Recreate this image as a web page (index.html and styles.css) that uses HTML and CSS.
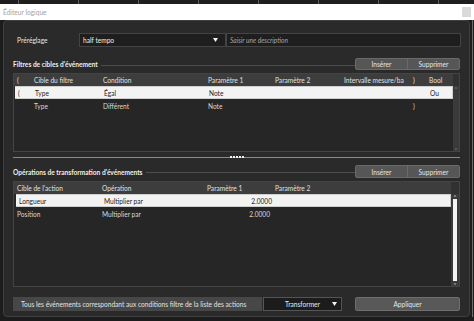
FILE: index.html
```html
<!DOCTYPE html>
<html lang="fr">
<head>
  <meta charset="UTF-8" />
  <title>Éditeur logique</title>
  <link rel="stylesheet" href="styles.css">
</head>
<body>

<div class="desk"></div>

<div class="titlebar">
  <span class="title">Éditeur logique</span>
  <span class="close"></span>
</div>

<div class="frame">
  <div class="panel">

    <div class="preset">
      <span class="preset-label">Préréglage</span>
      <div class="combo">
        <span>half tempo</span>
        <svg class="arrow" width="5" height="4" viewBox="0 0 5 4"><path d="M0 0H5L2.5 4Z" fill="#f2f2f2"/></svg>
      </div>
      <div class="desc">Saisir une description</div>
    </div>

    <div class="group-head">
      <span class="group-title">Filtres de cibles d'événement</span>
      <span class="rule"></span>
      <div class="btns">
        <button>Insérer</button>
        <button>Supprimer</button>
      </div>
    </div>

    <div class="table table-filters">
      <div class="grid">
        <div class="row head">
          <span>(</span><span>Cible du filtre</span><span>Condition</span><span>Paramètre 1</span><span>Paramètre 2</span><span>Intervalle mesure/ba</span><span>)</span><span>Bool</span>
        </div>
        <div class="row selected">
          <span>(</span><span>Type</span><span>Égal</span><span>Note</span><span></span><span></span><span></span><span>Ou</span>
        </div>
        <div class="row">
          <span></span><span>Type</span><span>Différent</span><span>Note</span><span></span><span></span><span>)</span><span></span>
        </div>
      </div>
      <div class="scroll">
        <div class="scroll-top"></div>
        <div class="track">
          <span class="chev">˄</span>
          <span class="chev">˅</span>
        </div>
      </div>
    </div>

    <div class="splitter"><span class="grip"></span></div>

    <div class="group-head head2">
      <span class="group-title">Opérations de transformation d'événements</span>
      <span class="rule"></span>
      <div class="btns">
        <button>Insérer</button>
        <button>Supprimer</button>
      </div>
    </div>

    <div class="table table-ops">
      <div class="grid">
        <div class="row head">
          <span>Cible de l'action</span><span>Opération</span><span>Paramètre 1</span><span>Paramètre 2</span>
        </div>
        <div class="row selected">
          <span>Longueur</span><span>Multiplier par</span><span class="num">2.0000</span><span></span>
        </div>
        <div class="row">
          <span>Position</span><span>Multiplier par</span><span class="num">2.0000</span><span></span>
        </div>
      </div>
      <div class="scroll">
        <div class="scroll-top"></div>
        <div class="track light">
          <span class="chev">˄</span>
          <span class="thumb"></span>
          <span class="chev">˅</span>
        </div>
      </div>
    </div>

    <div class="footer">
      <div class="note">Tous les événements correspondant aux conditions filtre de la liste des actions</div>
      <div class="mode">
        <span>Transformer</span>
        <svg class="arrow" width="5" height="4" viewBox="0 0 5 4"><path d="M0 0H5L2.5 4Z" fill="#f2f2f2"/></svg>
      </div>
      <button class="apply">Appliquer</button>
    </div>

  </div>
  <div class="edge"></div>
</div>

</body>
</html>
```

FILE: styles.css
```css
* {
  box-sizing: border-box;
}
html, body {
  margin: 0;
}
body {
  width: 474px;
  height: 321px;
  overflow: hidden;
  background-color: #1c1c1c;
  font-family: Lato, "Open Sans", sans-serif;
  font-size: 6.6px;
  color: #dcdcdc;
}
.desk {
  height: 4px;
  background-color: #1e1e1e;
  background-image: repeating-linear-gradient(90deg, #5c5c5c 0 1px, transparent 1px 60px);
  background-position: 18px 0;
}
.titlebar {
  height: 16px;
  background-color: #ffffff;
  display: flex;
  align-items: center;
  padding: 0 3px 0 3px;
}
.title {
  color: #a3a3a3;
}
.close {
  margin-left: auto;
  width: 9px;
  height: 10px;
  background-color: #dadada;
}
.frame {
  display: flex;
  height: 301px;
  padding: 0 0 4px 3px;
}
.panel {
  width: 467px;
  display: flex;
  flex-direction: column;
  background-color: #2a2a2a;
  border: 1px solid #3f3f3f;
  border-radius: 4px;
  padding: 12px 9px 5px 9px;
}
.edge {
  width: 4px;
  background: linear-gradient(90deg, #1c1c1c 0 2px, #6a6a6a 2px 3px, #1c1c1c 3px);
}

/* preset row */
.preset {
  display: flex;
  height: 14px;
  align-items: stretch;
}
.preset-label {
  width: 66px;
  padding-left: 4px;
  display: flex;
  align-items: center;
  color: #e6e6e6;
}
.combo, .desc {
  background-color: #1e1e1e;
  border: 1px solid #444444;
  display: flex;
  align-items: center;
  padding: 0 3px;
}
.combo {
  width: 147px;
  justify-content: space-between;
  color: #eeeeee;
}
.combo .arrow {
  margin-right: 4px;
}
.desc {
  flex: 1;
  margin-right: -1px;
  color: #a5a5a5;
  font-style: italic;
}

/* group headers */
.group-head {
  display: flex;
  align-items: center;
  height: 12px;
  margin-top: 11px;
}
.head2 {
  height: 13px;
  margin-top: 0;
}
.group-title {
  font-weight: bold;
  color: #eeeeee;
  padding-right: 3px;
}
.rule {
  flex: 1;
  height: 1px;
  margin-top: 2px;
  background-color: #4e4e4e;
}
.btns {
  display: flex;
  width: 105px;
  height: 100%;
  background-color: #565656;
  border: 1px solid #6a6a6a;
  border-radius: 2px;
}
.btns button {
  flex: 1;
  background: none;
  border: none;
  padding: 0;
  font: inherit;
  color: #e4e4e4;
}
.btns button + button {
  border-left: 1px solid #6a6a6a;
}

/* tables */
.table {
  display: flex;
  margin-top: 3px;
  background-color: #262626;
  border: 1px solid #444444;
}
.table-filters {
  height: 79px;
}
.table-ops {
  height: 106px;
}
.grid {
  flex: 1;
}
.row {
  display: grid;
  height: 13px;
  align-items: center;
  color: #d8d8d8;
}
.row span {
  padding-left: 3px;
  white-space: nowrap;
  overflow: hidden;
}
.row.head {
  height: 12px;
  background-color: #3d3d3d;
  color: #e0e0e0;
}
.row.selected {
  background-color: #f3f3f3;
  color: #232323;
  margin-left: 1px;
  border: 1px solid #cfcfcf;
  border-left: none;
}
.table-filters .row {
  grid-template-columns: 17px 69px 105px 67px 69px 69px 16px 25px;
}
.table-ops .row {
  grid-template-columns: 85px 105px 68px 1fr;
}
.table-ops .row.selected {
  margin-left: 2px;
}
.row .num {
  text-align: right;
  padding-right: 2px;
}

.scroll {
  width: 8px;
  display: flex;
  flex-direction: column;
}
.scroll-top {
  height: 12px;
  background-color: #313131;
}
.track {
  flex: 1;
  display: flex;
  flex-direction: column;
  justify-content: space-between;
  align-items: center;
  background-color: #3a3a3a;
  color: #8a8a8a;
  font-size: 6px;
  line-height: 5px;
}
.track.light {
  color: #dcdcdc;
}
.chev {
  height: 4px;
}
.thumb {
  flex: 1;
  width: 4px;
  margin: 1px 0;
  background-color: #f4f4f4;
}

/* splitter */
.splitter {
  height: 13px;
  display: flex;
  justify-content: center;
  padding-top: 5px;
  background: linear-gradient(#8a8a8a, #8a8a8a) no-repeat 0 5px / 100% 1px;
}
.grip {
  width: 14px;
  height: 2px;
  margin-top: -1px;
  background-image: repeating-linear-gradient(90deg, #f0f0f0 0 2px, transparent 2px 3px);
}

/* footer */
.footer {
  display: flex;
  height: 14px;
  margin-top: 10px;
}
.note {
  width: 249px;
  background-color: #474747;
  padding-left: 8px;
  display: flex;
  align-items: center;
  white-space: nowrap;
  overflow: hidden;
  color: #e2e2e2;
}
.mode {
  width: 79px;
  margin-left: 1px;
  background-color: #1c1c1c;
  border: 1px solid #555555;
  display: flex;
  align-items: center;
  justify-content: center;
  position: relative;
  color: #e8e8e8;
}
.mode .arrow {
  position: absolute;
  right: 4px;
  top: 4px;
}
.apply {
  width: 105px;
  margin-left: auto;
  background-color: #585858;
  border: 1px solid #6e6e6e;
  border-radius: 2px;
  font: inherit;
  color: #e6e6e6;
  padding: 0;
}
```
